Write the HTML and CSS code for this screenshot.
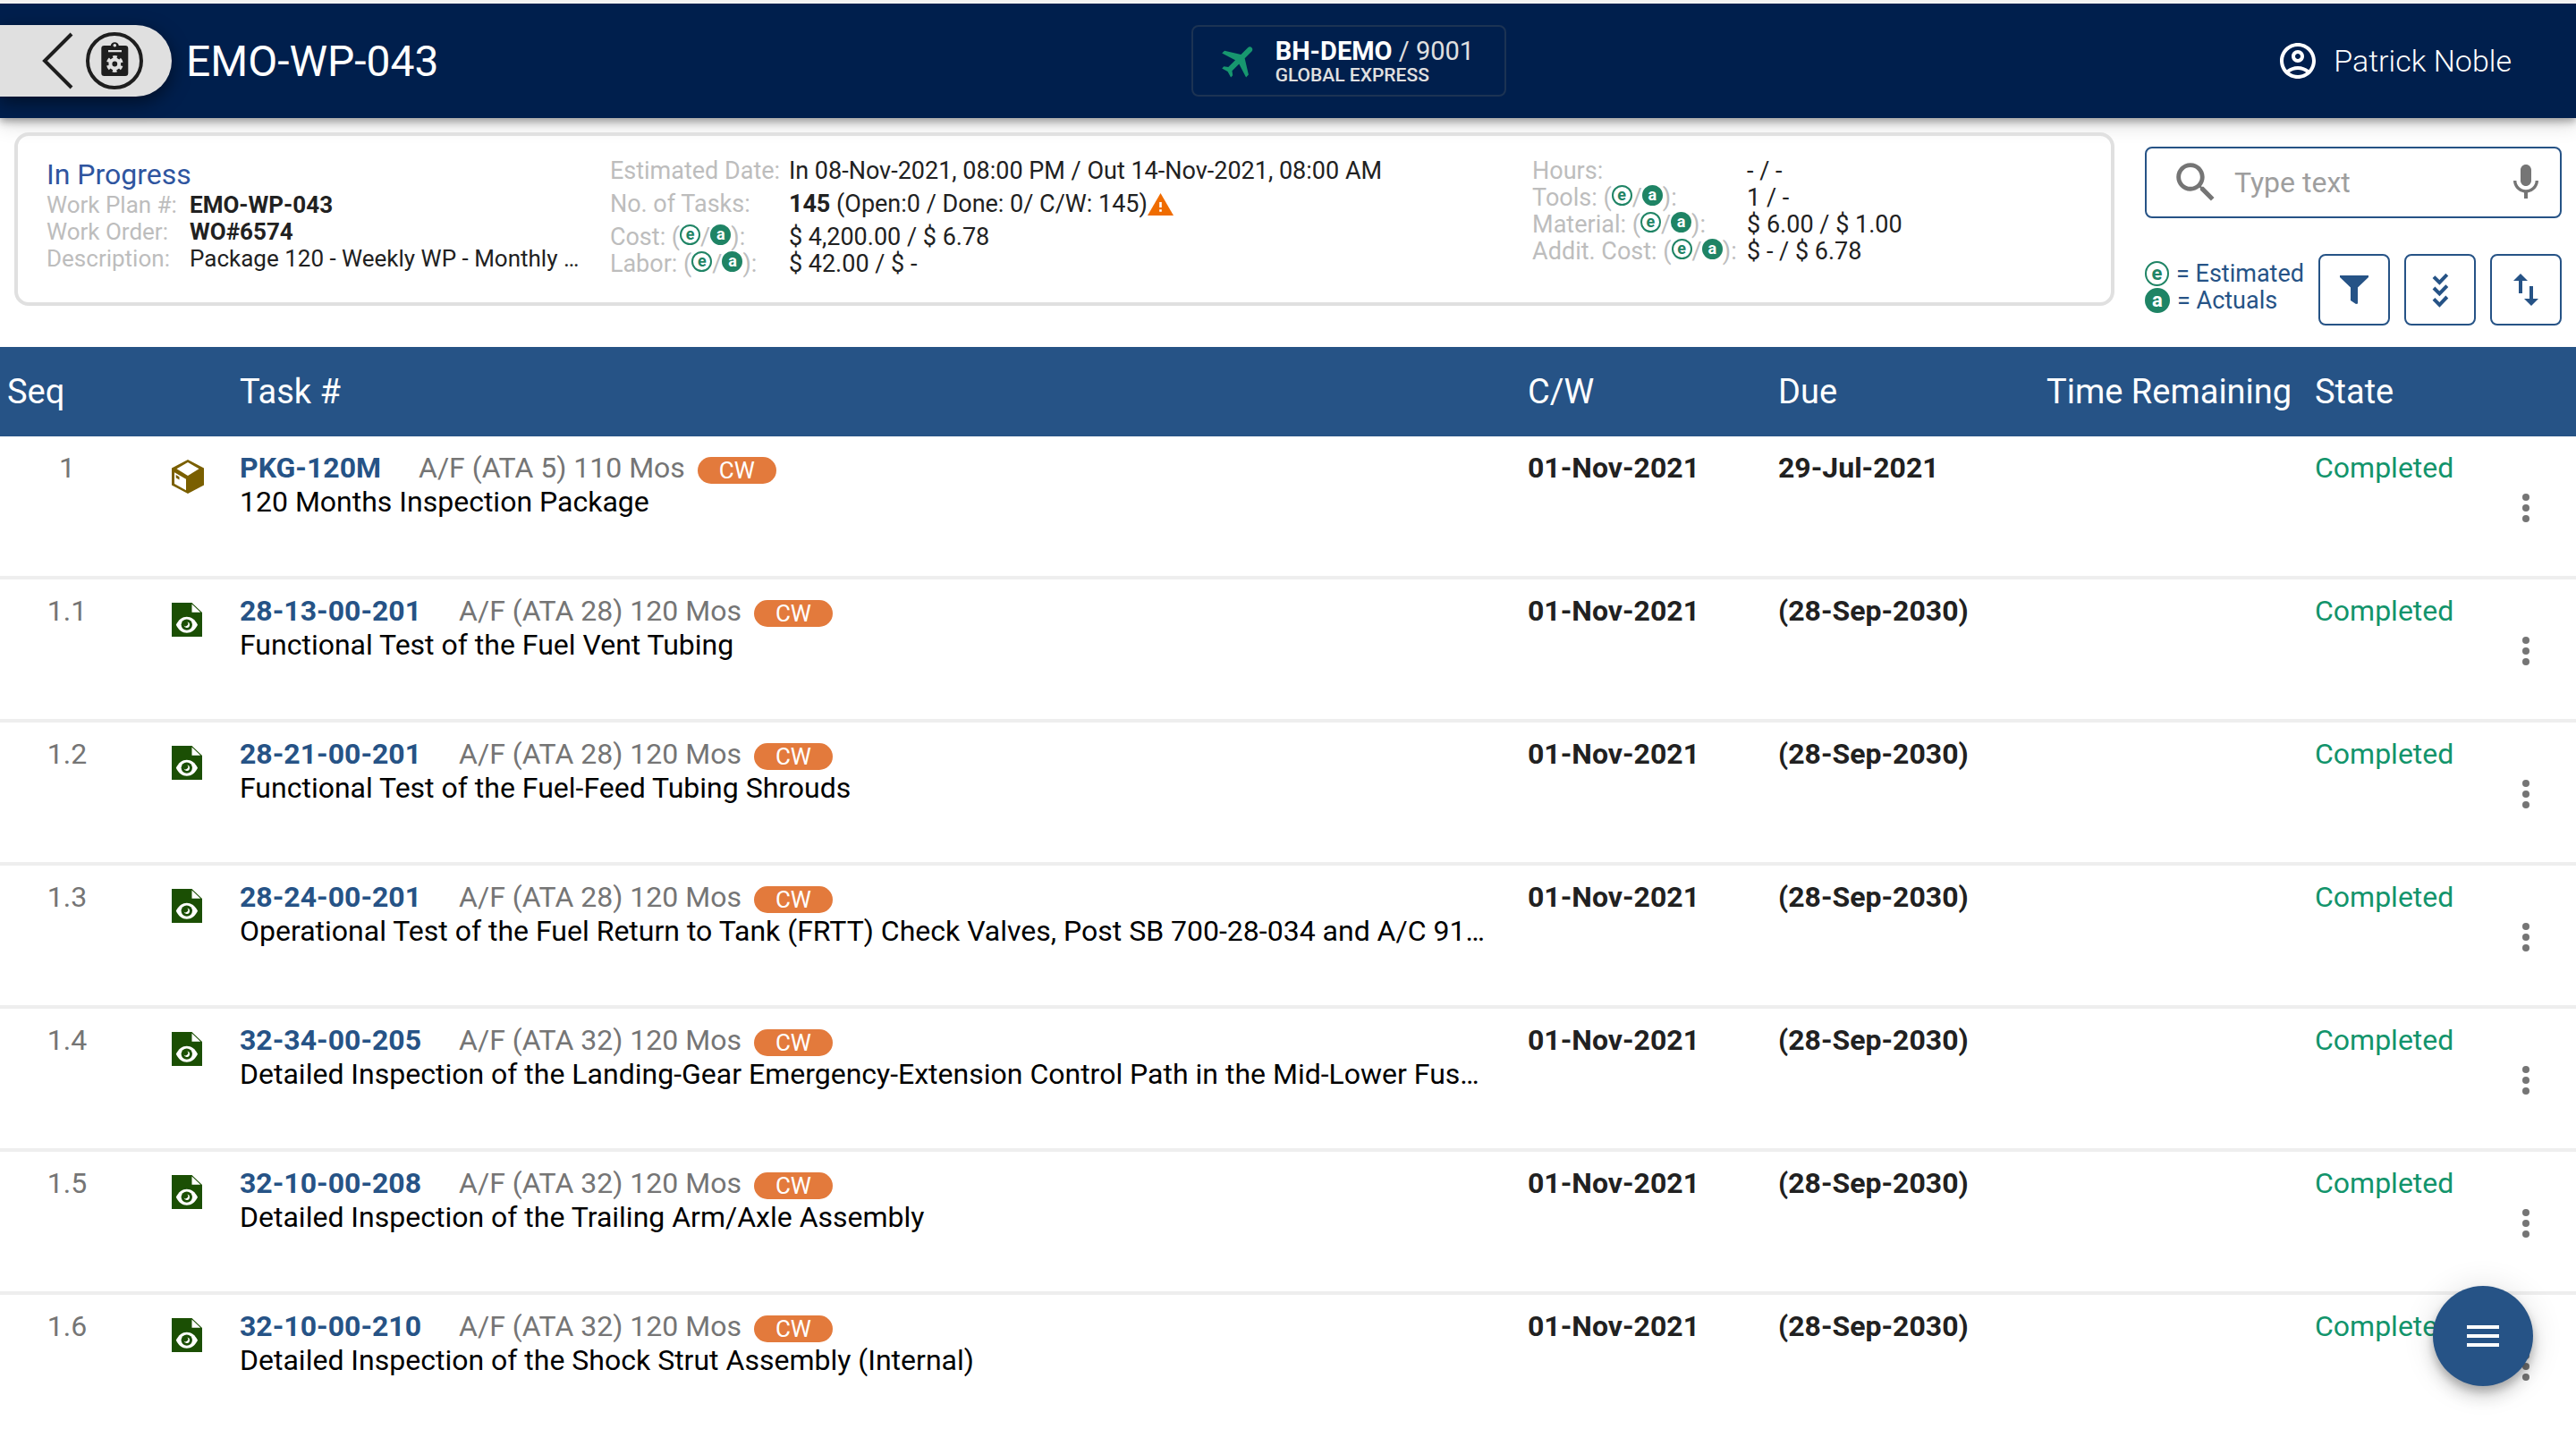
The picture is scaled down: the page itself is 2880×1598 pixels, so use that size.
FILE: index.html
```
<!DOCTYPE html>
<html lang="en">
<head>
    <meta charset="UTF-8">
    <meta name="viewport" content="width=device-width, initial-scale=1.0">
    <title>EMO-WP-043</title>
    <link rel="stylesheet" href="styles.css">
</head>
<body>

    <!-- Shared icons -->
    <svg class="sprite" aria-hidden="true">
        <symbol id="icon-doc" viewBox="0 0 34 38">
            <path fill="#1b4f04" d="M0 0h22.500l11.500 11v27H0z"/>
            <path fill="#fff" d="M22.500 1.500v9.300h9.700z"/>
            <path fill="#fff" d="M4.800 24.800C7.500 19 12 15.800 16.800 15.800S26.300 19 29 24.800C26.300 30.600 21.600 33.800 16.800 33.800S7.500 30.600 4.800 24.800z"/>
            <circle cx="16.800" cy="24.600" r="6.200" fill="#1b4f04"/>
            <path fill="#fff" d="M17.300 21.400a3.300 3.300 0 1 1-3.700 4.200 2.600 2.600 0 0 0 3.700-4.200z"/>
        </symbol>
        <symbol id="icon-package" viewBox="0 0 36 38">
            <path fill="#7a5f00" d="M18 0l18 9.500v19L18 38 0 28.500v-19z"/>
            <path fill="#fff" d="M18 3l12.500 7.200L18 18 5.500 10.200z"/>
            <path fill="#fff" d="M3 14.200l13 7.600v12.400L3 27z"/>
            <path fill="#7a5f00" d="M4.700 17l3.800 2.200v3.300l-3.800-2.200z"/>
        </symbol>
        <symbol id="icon-dots" viewBox="0 0 24 24">
            <circle cx="12" cy="6" r="2"/><circle cx="12" cy="12" r="2"/><circle cx="12" cy="18" r="2"/>
        </symbol>
    </svg>

    <header class="topbar">
        <div class="topbar-left">
            <a class="back" href="#" aria-label="Back to work plans">
                <svg class="back-arrow" viewBox="0 0 35 64"><path d="M33 2L3 32l30 30"/></svg>
                <svg class="back-plan" viewBox="0 0 64 64">
                    <circle cx="32" cy="32" r="30" fill="none" stroke="#1e1e1e" stroke-width="4"/>
                    <path fill="#1e1e1e" fill-rule="evenodd" d="M20.500 15h7.300a4.600 4.600 0 0 1 9 0h7.300a3.200 3.200 0 0 1 3.200 3.200v27.600a3.200 3.200 0 0 1-3.200 3.200H20.500a3.200 3.200 0 0 1-3.200-3.200V18.200a3.200 3.200 0 0 1 3.200-3.200zM32.300 13a1.800 1.800 0 1 0 0 3.600 1.800 1.800 0 0 0 0-3.600zM25 20h15v2.300H25z"/>
                    <circle cx="32.300" cy="35.500" r="4.900" fill="none" stroke="#e0e0e0" stroke-width="4"/>
                    <circle cx="32.300" cy="35.500" r="7.600" fill="none" stroke="#e0e0e0" stroke-width="3.600" stroke-dasharray="4.400 3.560" stroke-dashoffset="2.200" transform="rotate(30 32.300 35.500)"/>
                </svg>
            </a>
            <h1 class="page-title">EMO-WP-043</h1>
        </div>

        <div class="aircraft">
            <svg class="icon-48" viewBox="0 0 24 24"><path fill="#17976f" transform="rotate(45 12 12)" d="M21 16v-2l-8-5V3.500C13 2.670 12.330 2 11.500 2S10 2.670 10 3.500V9l-8 5v2l8-2.500V19l-2 1.500V22l3.500-1 3.500 1v-1.500L13 19v-5.500l8 2.500z"/></svg>
            <div>
                <div class="aircraft-reg"><strong>BH-DEMO</strong> / 9001</div>
                <div class="aircraft-type">GLOBAL EXPRESS</div>
            </div>
        </div>

        <a class="user" href="#">
            <svg class="icon-48" viewBox="0 0 24 24"><path fill="#fff" fill-rule="evenodd" d="M12 2C6.480 2 2 6.480 2 12s4.480 10 10 10 10-4.480 10-10S17.520 2 12 2zM7.350 18.500C8.660 17.560 10.260 17 12 17s3.340.56 4.650 1.500C15.340 19.440 13.740 20 12 20s-3.340-.56-4.650-1.500zM18.140 17.120C16.450 15.800 14.320 15 12 15s-4.450.8-6.140 2.120C4.700 15.730 4 13.950 4 12c0-4.420 3.580-8 8-8s8 3.580 8 8c0 1.950-.7 3.730-1.860 5.120zM12 6c-1.930 0-3.500 1.570-3.500 3.500S10.070 13 12 13s3.500-1.570 3.500-3.500S13.930 6 12 6zM12 11c-.83 0-1.500-.67-1.500-1.500S11.170 8 12 8s1.500.67 1.500 1.500S12.830 11 12 11z"/></svg>
            <span>Patrick Noble</span>
        </a>
    </header>

    <main>
        <section class="summary">
            <div class="summary-card">
                <div class="summary-col">
                    <div class="status">In Progress</div>
                    <dl class="facts facts-plan">
                        <dt>Work Plan #:</dt><dd><strong>EMO-WP-043</strong></dd>
                        <dt>Work Order:</dt><dd><strong>WO#6574</strong></dd>
                        <dt>Description:</dt><dd>Package 120 - Weekly WP - Monthly …</dd>
                    </dl>
                </div>

                <div class="summary-col">
                    <dl class="facts facts-cost">
                        <dt class="spaced">Estimated Date:</dt><dd class="spaced">In 08-Nov-2021, 08:00 PM / Out 14-Nov-2021, 08:00 AM</dd>
                        <dt class="spaced">No. of Tasks:</dt>
                        <dd class="spaced"><strong>145</strong> (Open:0 / Done: 0/ C/W: 145)<svg class="warning" viewBox="0 0 29 25"><path fill="#ef6c00" d="M14.500 0L29 25H0z"/><path fill="#fff" d="M13.200 10h2.600v6h-2.600zM13.200 18.200h2.600v2.600h-2.600z"/></svg></dd>
                        <dt>Cost: (<span class="mark">e</span>/<span class="mark mark-full">a</span>):</dt><dd>$ 4,200.00 / $ 6.78</dd>
                        <dt>Labor: (<span class="mark">e</span>/<span class="mark mark-full">a</span>):</dt><dd>$ 42.00 / $ -</dd>
                    </dl>
                </div>

                <div class="summary-col">
                    <dl class="facts facts-hours">
                        <dt>Hours:</dt><dd>- / -</dd>
                        <dt>Tools: (<span class="mark">e</span>/<span class="mark mark-full">a</span>):</dt><dd>1 / -</dd>
                        <dt>Material: (<span class="mark">e</span>/<span class="mark mark-full">a</span>):</dt><dd>$ 6.00 / $ 1.00</dd>
                        <dt>Addit. Cost: (<span class="mark">e</span>/<span class="mark mark-full">a</span>):</dt><dd>$ - / $ 6.78</dd>
                    </dl>
                </div>
            </div>

            <div class="tools">
                <div class="search">
                    <svg class="search-icon" viewBox="0 0 24 24"><path fill="#757575" d="M15.500 14h-.79l-.28-.27C15.410 12.590 16 11.110 16 9.500 16 5.910 13.090 3 9.500 3S3 5.910 3 9.500 5.910 16 9.500 16c1.610 0 3.090-.59 4.230-1.570l.27.28v.79l5 4.990L20.490 19l-4.990-5zm-6 0C7.010 14 5 11.990 5 9.500S7.010 5 9.500 5 14 7.010 14 9.500 11.990 14 9.500 14z"/></svg>
                    <input type="text" class="search-input" placeholder="Type text" aria-label="Search tasks">
                    <button class="icon-button" aria-label="Voice search">
                        <svg class="icon-48" viewBox="0 0 24 24"><path fill="#757575" d="M12 14c1.660 0 2.990-1.340 2.990-3L15 5c0-1.660-1.340-3-3-3S9 3.340 9 5v6c0 1.660 1.340 3 3 3zm5.300-3c0 3-2.540 5.100-5.300 5.100S6.700 14 6.700 11H5c0 3.410 2.720 6.230 6 6.720V21h2v-3.280c3.280-.48 6-3.300 6-6.720h-1.700z"/></svg>
                    </button>
                </div>
                <div class="tool-row">
                    <div class="legend">
                        <div class="legend-line"><span class="mark mark-large">e</span> = Estimated</div>
                        <div class="legend-line"><span class="mark mark-large mark-full">a</span> = Actuals</div>
                    </div>
                    <button class="tool-button" aria-label="Filter">
                        <svg class="icon-48" viewBox="0 0 24 24"><path d="M4 4h16v1l-6 5.800v9l-1 .2-3-2v-7.200L4 5z"/></svg>
                    </button>
                    <button class="tool-button" aria-label="Expand all">
                        <svg class="icon-48" viewBox="0 0 24 24"><path class="chevrons" d="M8.500 4.800l3.200 3.200 4.200-4.400M8.500 11l3.200 3.200 4.200-4.400M8.500 17.200l3.200 3.200 4.200-4.400"/></svg>
                    </button>
                    <button class="tool-button" aria-label="Sort">
                        <svg class="icon-48" viewBox="0 0 24 24"><path d="M16 17.010V10h-2v7.010h-3L15 21l4-3.990h-3zM9 3L5 6.990h3V14h2V6.990h3L9 3z"/></svg>
                    </button>
                </div>
            </div>
        </section>

        <table class="tasks">
            <colgroup>
                <col class="col-seq"><col class="col-icon"><col><col class="col-cw"><col class="col-due"><col class="col-time"><col class="col-state"><col class="col-menu">
            </colgroup>
            <thead>
                <tr>
                    <th class="seq-head">Seq</th>
                    <th></th>
                    <th>Task #</th>
                    <th>C/W</th>
                    <th>Due</th>
                    <th>Time Remaining</th>
                    <th>State</th>
                    <th></th>
                </tr>
            </thead>
            <tbody>
                <tr>
                    <td class="seq">1</td>
                    <td class="type"><svg class="package-icon"><use href="#icon-package"/></svg></td>
                    <td>
                        <div class="task-line"><a href="#" class="task-code">PKG-120M</a><span class="task-ref">A/F (ATA 5) 110 Mos</span><span class="badge">CW</span></div>
                        <div class="task-name">120 Months Inspection Package</div>
                    </td>
                    <td class="date">01-Nov-2021</td>
                    <td class="date">29-Jul-2021</td>
                    <td></td>
                    <td class="state">Completed</td>
                    <td class="menu"><button class="icon-button" aria-label="Task menu"><svg class="icon-48"><use href="#icon-dots"/></svg></button></td>
                </tr>
                <tr>
                    <td class="seq">1.1</td>
                    <td class="type"><svg class="doc-icon"><use href="#icon-doc"/></svg></td>
                    <td>
                        <div class="task-line"><a href="#" class="task-code">28-13-00-201</a><span class="task-ref">A/F (ATA 28) 120 Mos</span><span class="badge">CW</span></div>
                        <div class="task-name">Functional Test of the Fuel Vent Tubing</div>
                    </td>
                    <td class="date">01-Nov-2021</td>
                    <td class="date">(28-Sep-2030)</td>
                    <td></td>
                    <td class="state">Completed</td>
                    <td class="menu"><button class="icon-button" aria-label="Task menu"><svg class="icon-48"><use href="#icon-dots"/></svg></button></td>
                </tr>
                <tr>
                    <td class="seq">1.2</td>
                    <td class="type"><svg class="doc-icon"><use href="#icon-doc"/></svg></td>
                    <td>
                        <div class="task-line"><a href="#" class="task-code">28-21-00-201</a><span class="task-ref">A/F (ATA 28) 120 Mos</span><span class="badge">CW</span></div>
                        <div class="task-name">Functional Test of the Fuel-Feed Tubing Shrouds</div>
                    </td>
                    <td class="date">01-Nov-2021</td>
                    <td class="date">(28-Sep-2030)</td>
                    <td></td>
                    <td class="state">Completed</td>
                    <td class="menu"><button class="icon-button" aria-label="Task menu"><svg class="icon-48"><use href="#icon-dots"/></svg></button></td>
                </tr>
                <tr>
                    <td class="seq">1.3</td>
                    <td class="type"><svg class="doc-icon"><use href="#icon-doc"/></svg></td>
                    <td>
                        <div class="task-line"><a href="#" class="task-code">28-24-00-201</a><span class="task-ref">A/F (ATA 28) 120 Mos</span><span class="badge">CW</span></div>
                        <div class="task-name">Operational Test of the Fuel Return to Tank (FRTT) Check Valves, Post SB 700-28-034 and A/C 91…</div>
                    </td>
                    <td class="date">01-Nov-2021</td>
                    <td class="date">(28-Sep-2030)</td>
                    <td></td>
                    <td class="state">Completed</td>
                    <td class="menu"><button class="icon-button" aria-label="Task menu"><svg class="icon-48"><use href="#icon-dots"/></svg></button></td>
                </tr>
                <tr>
                    <td class="seq">1.4</td>
                    <td class="type"><svg class="doc-icon"><use href="#icon-doc"/></svg></td>
                    <td>
                        <div class="task-line"><a href="#" class="task-code">32-34-00-205</a><span class="task-ref">A/F (ATA 32) 120 Mos</span><span class="badge">CW</span></div>
                        <div class="task-name">Detailed Inspection of the Landing-Gear Emergency-Extension Control Path in the Mid-Lower Fus…</div>
                    </td>
                    <td class="date">01-Nov-2021</td>
                    <td class="date">(28-Sep-2030)</td>
                    <td></td>
                    <td class="state">Completed</td>
                    <td class="menu"><button class="icon-button" aria-label="Task menu"><svg class="icon-48"><use href="#icon-dots"/></svg></button></td>
                </tr>
                <tr>
                    <td class="seq">1.5</td>
                    <td class="type"><svg class="doc-icon"><use href="#icon-doc"/></svg></td>
                    <td>
                        <div class="task-line"><a href="#" class="task-code">32-10-00-208</a><span class="task-ref">A/F (ATA 32) 120 Mos</span><span class="badge">CW</span></div>
                        <div class="task-name">Detailed Inspection of the Trailing Arm/Axle Assembly</div>
                    </td>
                    <td class="date">01-Nov-2021</td>
                    <td class="date">(28-Sep-2030)</td>
                    <td></td>
                    <td class="state">Completed</td>
                    <td class="menu"><button class="icon-button" aria-label="Task menu"><svg class="icon-48"><use href="#icon-dots"/></svg></button></td>
                </tr>
                <tr>
                    <td class="seq">1.6</td>
                    <td class="type"><svg class="doc-icon"><use href="#icon-doc"/></svg></td>
                    <td>
                        <div class="task-line"><a href="#" class="task-code">32-10-00-210</a><span class="task-ref">A/F (ATA 32) 120 Mos</span><span class="badge">CW</span></div>
                        <div class="task-name">Detailed Inspection of the Shock Strut Assembly (Internal)</div>
                    </td>
                    <td class="date">01-Nov-2021</td>
                    <td class="date">(28-Sep-2030)</td>
                    <td></td>
                    <td class="state">Completed</td>
                    <td class="menu"><button class="icon-button" aria-label="Task menu"><svg class="icon-48"><use href="#icon-dots"/></svg></button></td>
                </tr>
            </tbody>
        </table>
    </main>

    <button class="fab" aria-label="Open actions">
        <svg class="icon-48" viewBox="0 0 24 24"><path fill="#fff" d="M3 18h18v-2H3v2zm0-5h18v-2H3v2zm0-7v2h18V6H3z"/></svg>
    </button>

</body>
</html>
```
FILE: styles.css
```
* {
    box-sizing: border-box;
}

body {
    margin: 0;
    font-family: Roboto, Arial, sans-serif;
    font-size: 32px;
    color: #212121;
    background-color: #fff;
}

a {
    color: inherit;
    text-decoration: none;
}

button {
    padding: 0;
    border: none;
    background: none;
    cursor: pointer;
}

svg {
    display: block;
    flex: none;
}

.sprite {
    display: none;
}

.icon-48 {
    width: 48px;
    height: 48px;
}

/* Top bar */
.topbar {
    display: flex;
    align-items: center;
    justify-content: space-between;
    height: 132px;
    border-top: 4px solid #f2f2f2;
    background-color: #001f4d;
    color: #fff;
    box-shadow: 0 4px 8px rgba(0, 0, 0, 0.3), 0 8px 20px rgba(0, 0, 0, 0.15);
}

.topbar-left {
    display: flex;
    align-items: center;
    gap: 16px;
}

.back {
    display: flex;
    align-items: center;
    gap: 14px;
    height: 80px;
    padding: 0 32px 0 47px;
    border-radius: 0 40px 40px 0;
    background-color: #e0e0e0;
    box-shadow: 0 6px 20px rgba(0, 0, 0, 0.5);
}

.back-arrow {
    width: 35px;
    height: 64px;
    fill: none;
    stroke: #1e1e1e;
    stroke-width: 4;
}

.back-plan {
    width: 64px;
    height: 64px;
}

.page-title {
    margin: 0;
    font-size: 48px;
    font-weight: 400;
}

.aircraft {
    display: flex;
    align-items: center;
    gap: 16px;
    height: 80px;
    padding: 0 34px 0 28px;
    border: 2px solid #1c3353;
    border-radius: 8px;
}

.aircraft-reg {
    font-size: 29px;
    line-height: 32px;
    color: #e0e0e0;
}

.aircraft-reg strong {
    color: #fff;
}

.aircraft-type {
    font-size: 21px;
    font-weight: 500;
    line-height: 22px;
    color: #e0e0e0;
}

.user {
    display: flex;
    align-items: center;
    gap: 16px;
    padding: 0 72px 0 20px;
    font-size: 34px;
    font-weight: 300;
}

/* Work plan summary */
.summary {
    display: flex;
    align-items: flex-start;
    gap: 34px;
    padding: 16px 16px 24px;
}

.summary-card {
    flex: 1;
    display: grid;
    grid-template-columns: 631fr 1033fr 616fr;
    padding: 24px 32px 28px;
    border: 4px solid #e0e0e0;
    border-radius: 16px;
    font-size: 27px;
    line-height: 30px;
}

.summary-col {
    min-width: 0;
}

.status {
    font-size: 32px;
    line-height: 38px;
    color: #2f559f;
}

.facts {
    display: grid;
    margin: 0;
}

.facts-plan {
    grid-template-columns: 160px 1fr;
    padding-right: 16px;
    font-size: 26px;
}

.facts-cost {
    grid-template-columns: 200px 1fr;
}

.facts-hours {
    grid-template-columns: 240px 1fr;
}

.facts dt,
.facts dd {
    height: 30px;
    margin: 0;
    white-space: nowrap;
}

.facts dt {
    color: #bdbdbd;
}

.facts .spaced {
    margin-bottom: 7px;
}

.facts-plan dd {
    overflow: hidden;
    text-overflow: ellipsis;
}

.warning {
    display: inline-block;
    width: 29px;
    height: 25px;
    vertical-align: -4px;
}

.mark {
    display: inline-flex;
    align-items: center;
    justify-content: center;
    width: 23px;
    height: 23px;
    border: 2px solid #1f8465;
    border-radius: 50%;
    font-size: 18px;
    font-weight: 700;
    line-height: 18px;
    color: #1f8465;
    vertical-align: 6px;
}

.mark-full {
    background-color: #1f8465;
    color: #fff;
}

.mark-large {
    width: 28px;
    height: 28px;
    margin-right: 8px;
    font-size: 22px;
}

/* Search and list tools */
.tools {
    width: 466px;
    padding-top: 16px;
}

.search {
    display: flex;
    align-items: center;
    height: 80px;
    padding: 0 14px 0 26px;
    border: 2px solid #265386;
    border-radius: 8px;
}

.search-icon {
    width: 58px;
    height: 58px;
}

.search-input {
    flex: 1;
    min-width: 0;
    padding: 0 0 0 14px;
    border: none;
    outline: none;
    font: inherit;
}

.search-input::placeholder {
    color: #9e9e9e;
}

.tool-row {
    display: flex;
    align-items: center;
    gap: 16px;
    margin-top: 40px;
}

.legend {
    flex: 1;
    min-width: 0;
    padding-bottom: 6px;
    font-size: 27px;
    line-height: 30px;
    white-space: nowrap;
    color: #265386;
}

.legend-line {
    display: flex;
    align-items: center;
    height: 30px;
}

.tool-button {
    display: flex;
    flex: none;
    align-items: center;
    justify-content: center;
    width: 80px;
    height: 80px;
    border: 2px solid #265386;
    border-radius: 8px;
    fill: #265386;
}

.chevrons {
    fill: none;
    stroke: #265386;
    stroke-width: 2;
}

/* Task list */
.tasks {
    width: 100%;
    table-layout: fixed;
    border-spacing: 0;
    line-height: 38px;
}

.col-seq { width: 150px; }
.col-icon { width: 118px; }
.col-cw { width: 280px; }
.col-due { width: 300px; }
.col-time { width: 300px; }
.col-state { width: 200px; }
.col-menu { width: 92px; }

.tasks th {
    height: 100px;
    padding: 0;
    background-color: #265386;
    color: #fff;
    font-size: 38px;
    font-weight: 400;
    text-align: left;
    white-space: nowrap;
}

.tasks .seq-head {
    padding-left: 8px;
}

.tasks td {
    height: 160px;
    padding: 16px 0 0;
    border-bottom: 4px solid #eee;
    vertical-align: top;
}

.tasks tr:last-child td {
    height: 150px;
    border-bottom: none;
}

.tasks .seq {
    text-align: center;
    color: #757575;
}

.tasks .type {
    padding: 26px 0 0 42px;
}

.package-icon {
    width: 36px;
    height: 38px;
}

.doc-icon {
    width: 34px;
    height: 38px;
}

.task-line {
    display: flex;
    align-items: center;
    height: 38px;
}

.task-code {
    font-weight: 700;
    color: #265386;
}

.task-ref {
    margin-left: 42px;
    color: #757575;
}

.badge {
    width: 88px;
    height: 30px;
    margin: 6px 0 0 14px;
    border-radius: 15px;
    background-color: #e37a3c;
    color: #fff;
    font-size: 26px;
    line-height: 30px;
    text-align: center;
}

.task-name {
    padding-right: 8px;
    overflow: hidden;
    text-overflow: ellipsis;
    white-space: nowrap;
    color: #000;
}

.date {
    font-weight: 700;
}

.state {
    color: #12946b;
}

.tasks .menu {
    padding: 56px 0 0 12px;
    fill: #757575;
}

/* Floating menu button */
.fab {
    position: fixed;
    right: 48px;
    bottom: 48px;
    display: flex;
    align-items: center;
    justify-content: center;
    width: 112px;
    height: 112px;
    border-radius: 50%;
    background-color: #265386;
    box-shadow: 0 6px 10px rgba(0, 0, 0, 0.2), 0 12px 20px rgba(0, 0, 0, 0.14), 0 2px 36px rgba(0, 0, 0, 0.12);
}
```
